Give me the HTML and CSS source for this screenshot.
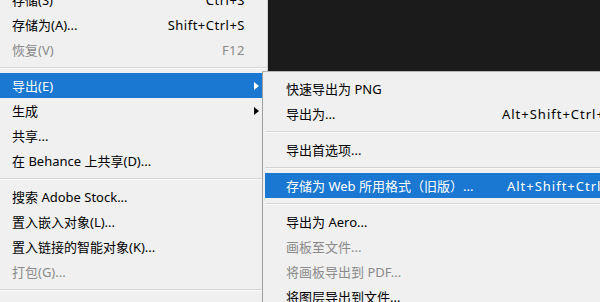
FILE: index.html
```html
<!DOCTYPE html>
<html>
<head>
    <title>导出菜单</title>
    <link rel="stylesheet" href="styles.css">
</head>
<body>
    <div class="screen">
        <!-- File menu -->
        <div class="menu">
            <div class="item"><span class="label">存储(S)</span><span class="key">Ctrl+S</span></div>
            <div class="item"><span class="label">存储为(A)...</span><span class="key">Shift+Ctrl+S</span></div>
            <div class="item disabled"><span class="label">恢复(V)</span><span class="key">F12</span></div>
            <div class="sep"></div>
            <div class="item active"><span class="label">导出(E)</span><span class="key"></span><span class="arrow"></span></div>
            <div class="item"><span class="label">生成</span><span class="key"></span><span class="arrow"></span></div>
            <div class="item"><span class="label">共享...</span></div>
            <div class="item"><span class="label">在 Behance 上共享(D)...</span></div>
            <div class="sep"></div>
            <div class="item"><span class="label">搜索 Adobe Stock...</span></div>
            <div class="item"><span class="label">置入嵌入对象(L)...</span></div>
            <div class="item"><span class="label">置入链接的智能对象(K)...</span></div>
            <div class="item disabled"><span class="label">打包(G)...</span></div>
            <div class="sep"></div>
            <div class="item"><span class="label">自动(U)</span><span class="key"></span><span class="arrow"></span></div>
        </div>

        <!-- Export submenu -->
        <div class="submenu">
            <div class="item"><span class="label">快速导出为 PNG</span></div>
            <div class="item"><span class="label">导出为...</span><span class="key">Alt+Shift+Ctrl+W</span></div>
            <div class="sep"></div>
            <div class="item"><span class="label">导出首选项...</span></div>
            <div class="sep"></div>
            <div class="item active"><span class="label">存储为 Web 所用格式（旧版）...</span><span class="key">Alt+Shift+Ctrl+S</span></div>
            <div class="sep"></div>
            <div class="item"><span class="label">导出为 Aero...</span></div>
            <div class="item disabled"><span class="label">画板至文件...</span></div>
            <div class="item disabled"><span class="label">将画板导出到 PDF...</span></div>
            <div class="item"><span class="label">将图层导出到文件...</span></div>
        </div>
    </div>
</body>
</html>
```

FILE: styles.css
```css
/* Page */
body {
    margin: 0;
    background-color: #1b1b1b;
    font-family: "Noto Sans", "Noto Sans CJK SC", sans-serif;
    font-size: 13px;
    color: #000;
}

.screen {
    position: relative;
    width: 600px;
    height: 302px;
    overflow: hidden;
    background-color: #1b1b1b;
}

/* Main menu */
.menu {
    width: 267px;
    margin-top: -13px;
    background-color: #f0f0f0;
    border-right: 1px solid #cfcfcf;
}

.item {
    display: grid;
    grid-template-columns: 1fr auto 22px;
    align-items: center;
    height: 25px;
    padding-left: 12px;
    white-space: nowrap;
}

.key {
    letter-spacing: 0.5px;
}

.item.disabled {
    color: #8a8a8a;
}

.item.active {
    background-color: #1a78d2;
    color: #fff;
}

.arrow {
    justify-self: center;
    width: 0;
    height: 0;
    border-top: 4px solid transparent;
    border-bottom: 4px solid transparent;
    border-left: 5px solid #000;
}

.item.active .arrow {
    border-left-color: #fff;
}

.sep {
    height: 1px;
    margin: 5px 0 4px;
    background-color: #d5d5d5;
    border-bottom: 1px solid #fafafa;
}

/* Export flyout */
.submenu {
    position: absolute;
    left: 262px;
    top: 71px;
    width: 362px;
    padding: 4px 0 4px 2px;
    background-color: #f0f0f0;
    border-left: 1px solid #9e9e9e;
    border-top: 1px solid #b5b5b5;
}

.submenu .item {
    grid-template-columns: 1fr auto;
    padding-left: 21px;
    padding-right: 9px;
}

.submenu .key {
    letter-spacing: 1px;
}
```
